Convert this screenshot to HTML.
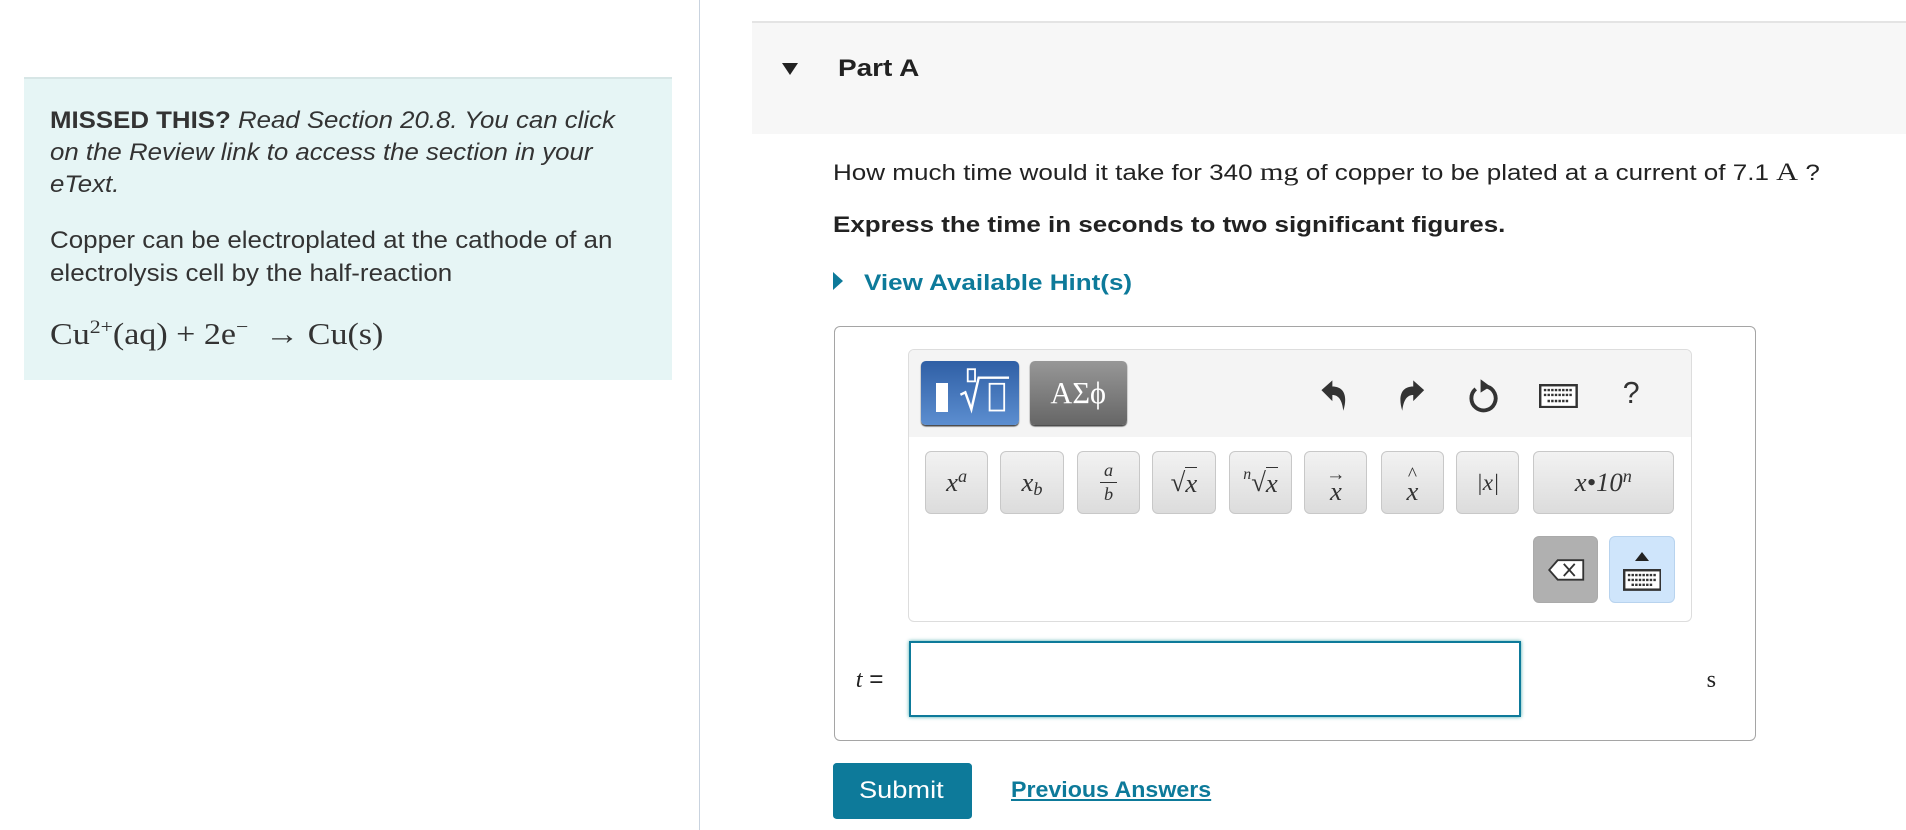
<!DOCTYPE html>
<html><head><meta charset="utf-8">
<style>
html,body{margin:0;padding:0;background:#fff;overflow:hidden}
body{width:1906px;height:830px}
#w{position:relative;width:1568px;height:683px;zoom:1.21556;font-family:"Liberation Sans",sans-serif;color:#333}
.a{position:absolute}
.sx{display:inline-block;transform-origin:0 50%;white-space:nowrap}
.bx{display:block;transform-origin:0 50%;white-space:nowrap}
.key{position:absolute;top:371px;height:52px;width:52px;border:1px solid #c8c8c8;border-radius:5px;background:linear-gradient(#f2f2f2,#dcdcdc);font-family:"Liberation Serif",serif;font-style:italic;font-size:22px;color:#333;display:flex;align-items:center;justify-content:center;box-sizing:border-box}
.ic{position:absolute;top:311px}
</style></head><body><div id="w">
<div class="a" style="left:575px;top:0;width:1px;height:683px;background:#c9d3df"></div>
<div class="a" style="left:20px;top:63px;width:533px;height:250px;background:#e6f5f5;border-top:2px solid #d7e6e6;box-sizing:border-box"></div>
<div class="a" style="left:41px;top:86px;font-size:19.5px;line-height:26.5px;color:#333">
<div class="bx" style="transform:scaleX(1.09)"><b>MISSED THIS?</b> <i>Read Section 20.8. You can click<br>on the Review link to access the section in your<br>eText.</i></div>
<div class="bx" style="transform:scaleX(1.095);margin-top:20px">Copper can be electroplated at the cathode of an<br>electrolysis cell by the half-reaction</div>
<div class="bx" style="margin-top:18px;font-family:'Liberation Serif',serif;font-size:25px;transform:scaleX(1.12)">Cu<sup style="font-size:16px">2+</sup>(aq) + 2e<sup style="font-size:16px">−</sup> &nbsp;→ Cu(s)</div>
</div>

<div class="a" style="left:619px;top:17px;width:949px;height:93px;background:#f7f7f7;border-top:2px solid #e4e4e4;box-sizing:border-box"></div>
<div class="a" style="left:643px;top:52px;width:0;height:0;border-left:7px solid transparent;border-right:7px solid transparent;border-top:10px solid #222"></div>
<div class="a" style="left:689px;top:45px;font-size:20px;font-weight:bold;color:#222"><span class="sx" style="transform:scaleX(1.15)">Part A</span></div>

<div class="a" style="left:685px;top:129px;font-size:18px;color:#222"><span class="sx" style="transform:scaleX(1.19)">How much time would it take for 340 <span style="font-family:'Liberation Serif',serif;font-size:21px">mg</span> of copper to be plated at a current of 7.1 <span style="font-family:'Liberation Serif',serif;font-size:21px">A</span> ?</span></div>
<div class="a" style="left:685px;top:174px;font-size:18px;font-weight:bold;color:#222"><span class="sx" style="transform:scaleX(1.187)">Express the time in seconds to two significant figures.</span></div>
<div class="a" style="left:685px;top:224px;width:0;height:0;border-top:8px solid transparent;border-bottom:8px solid transparent;border-left:9px solid #0d7a9a"></div>
<div class="a" style="left:711px;top:222px;font-size:18px;font-weight:bold;color:#0d7a9a"><span class="sx" style="transform:scaleX(1.19)">View Available Hint(s)</span></div>

<div class="a" style="left:686px;top:268px;width:759px;height:342px;border:1.5px solid #a5a5a5;border-radius:5px;box-sizing:border-box"></div>
<div class="a" style="left:747px;top:287px;width:645px;height:225px;border:1.5px solid #ddd;border-radius:5px;box-sizing:border-box;background:#fff;overflow:hidden">
<div style="height:72px;background:#f4f4f4"></div></div>
<div class="a" style="left:758px;top:297px;width:80px;height:53px;border-radius:4px;background:linear-gradient(#2f5fa5,#5c8ed0);box-shadow:0 1px 1px #444">
<div class="a" style="left:12px;top:18px;width:10px;height:24px;background:#fff"></div>
<svg class="a" style="left:30px;top:6px" width="44" height="40" viewBox="0 0 44 40"><path d="M2 22 L6 20 L11 34 L17 8 L42 8" fill="none" stroke="#fff" stroke-width="2"/><rect x="8" y="1" width="6" height="10" fill="none" stroke="#fff" stroke-width="1.5"/><rect x="26" y="13" width="12" height="22" fill="none" stroke="#fff" stroke-width="1.5"/></svg>
</div>
<div class="a" style="left:847px;top:297px;width:80px;height:53px;border-radius:4px;background:linear-gradient(#979797,#666);box-shadow:0 1px 1px #444;color:#fff;font-family:'Liberation Serif',serif;font-size:25px;text-align:center;line-height:53px">ΑΣϕ</div>

<svg class="ic" style="left:1085px" width="26" height="30" viewBox="0 0 26 30"><path d="M2 10 L11 2 L11 7 C20 7 24 14 20 27 C19 18 16 14 11 14 L11 19 Z" fill="#333"/></svg>
<svg class="ic" style="left:1148px" width="26" height="30" viewBox="0 0 26 30"><path d="M24 10 L15 2 L15 7 C6 7 2 14 6 27 C7 18 10 14 15 14 L15 19 Z" fill="#333"/></svg>
<svg class="ic" style="left:1206px" width="28" height="30" viewBox="0 0 28 30"><path d="M17 7 A10 10 0 1 1 8 9" fill="none" stroke="#333" stroke-width="3.2"/><path d="M12 1 L20 7 L12 12 Z" fill="#333"/></svg>
<svg class="ic" style="left:1266px;top:316px" width="32" height="20" viewBox="0 0 32 20"><rect x="1" y="1" width="30" height="18" fill="#fff" stroke="#333" stroke-width="2"/><path d="M4 5h24M4 9h24M7 14h18" stroke="#333" stroke-width="2" stroke-dasharray="2 1"/></svg>
<div class="a" style="left:1335px;top:309px;font-size:25px;color:#333">?</div>

<div class="key" style="left:761px">x<sup style="font-size:15px;margin-top:-10px">a</sup></div>
<div class="key" style="left:823px">x<sub style="font-size:15px;margin-bottom:-12px">b</sub></div>
<div class="key" style="left:886px;flex-direction:column;font-size:15px;line-height:15px"><span>a</span><span style="width:14px;border-top:1px solid #333;margin:2px 0"></span><span>b</span></div>
<div class="key" style="left:948px"><span style="font-style:normal">√</span><span style="border-top:1.5px solid #333">x</span></div>
<div class="key" style="left:1011px"><sup style="font-size:13px;margin-top:-12px">n</sup><span style="font-style:normal">√</span><span style="border-top:1.5px solid #333">x</span></div>
<div class="key" style="left:1073px;flex-direction:column;line-height:14px"><span style="font-style:normal;font-size:16px">→</span><span>x</span></div>
<div class="key" style="left:1136px;flex-direction:column;line-height:14px"><span style="font-style:normal;font-size:16px">^</span><span>x</span></div>
<div class="key" style="left:1198px;font-size:19px">|x|</div>
<div class="key" style="left:1261px;width:116px">x•10<sup style="font-size:15px;margin-top:-10px">n</sup></div>

<div class="a" style="left:1261px;top:441px;width:54px;height:55px;border-radius:5px;background:#b0b0b0;border:1px solid #aaa;box-sizing:border-box">
<svg class="a" style="left:12px;top:18px" width="30" height="18" viewBox="0 0 30 18"><path d="M8 1 H29 V17 H8 L1 9 Z" fill="#fff" stroke="#333" stroke-width="1.5"/><path d="M13 4 L22 14 M22 4 L13 14" stroke="#333" stroke-width="1.5"/></svg></div>
<div class="a" style="left:1324px;top:441px;width:54px;height:55px;border-radius:5px;background:#cfe5fb;border:1px solid #b8d3ee;box-sizing:border-box">
<div class="a" style="left:20px;top:12px;width:0;height:0;border-left:6px solid transparent;border-right:6px solid transparent;border-bottom:8px solid #222"></div>
<svg class="a" style="left:10px;top:26px" width="32" height="18" viewBox="0 0 32 18"><rect x="1" y="1" width="30" height="16" fill="#fff" stroke="#333" stroke-width="2"/><path d="M4 5h24M4 9h24M7 13h18" stroke="#333" stroke-width="2" stroke-dasharray="2 1"/></svg></div>

<div class="a" style="left:704px;top:548px;font-size:20px;color:#222"><i style="font-family:'Liberation Serif',serif">t</i> =</div>
<div class="a" style="left:748px;top:527px;width:503px;height:63px;border:2px solid #0d7a9a;box-shadow:0 0 3px #4aa;box-sizing:border-box;background:#fff"></div>
<div class="a" style="left:1404px;top:548px;font-family:'Liberation Serif',serif;font-size:20px;color:#222">s</div>

<div class="a" style="left:685px;top:628px;width:115px;height:46px;border-radius:3px;background:#0d7a9a;color:#fff;font-size:20px;line-height:46px"><span class="sx" style="margin-left:22px;transform:scaleX(1.12)">Submit</span></div>
<div class="a" style="left:832px;top:639px;font-size:18px;font-weight:bold;color:#0d7a9a"><span class="sx" style="transform:scaleX(1.06);text-decoration:underline">Previous Answers</span></div>
</div></body></html>
